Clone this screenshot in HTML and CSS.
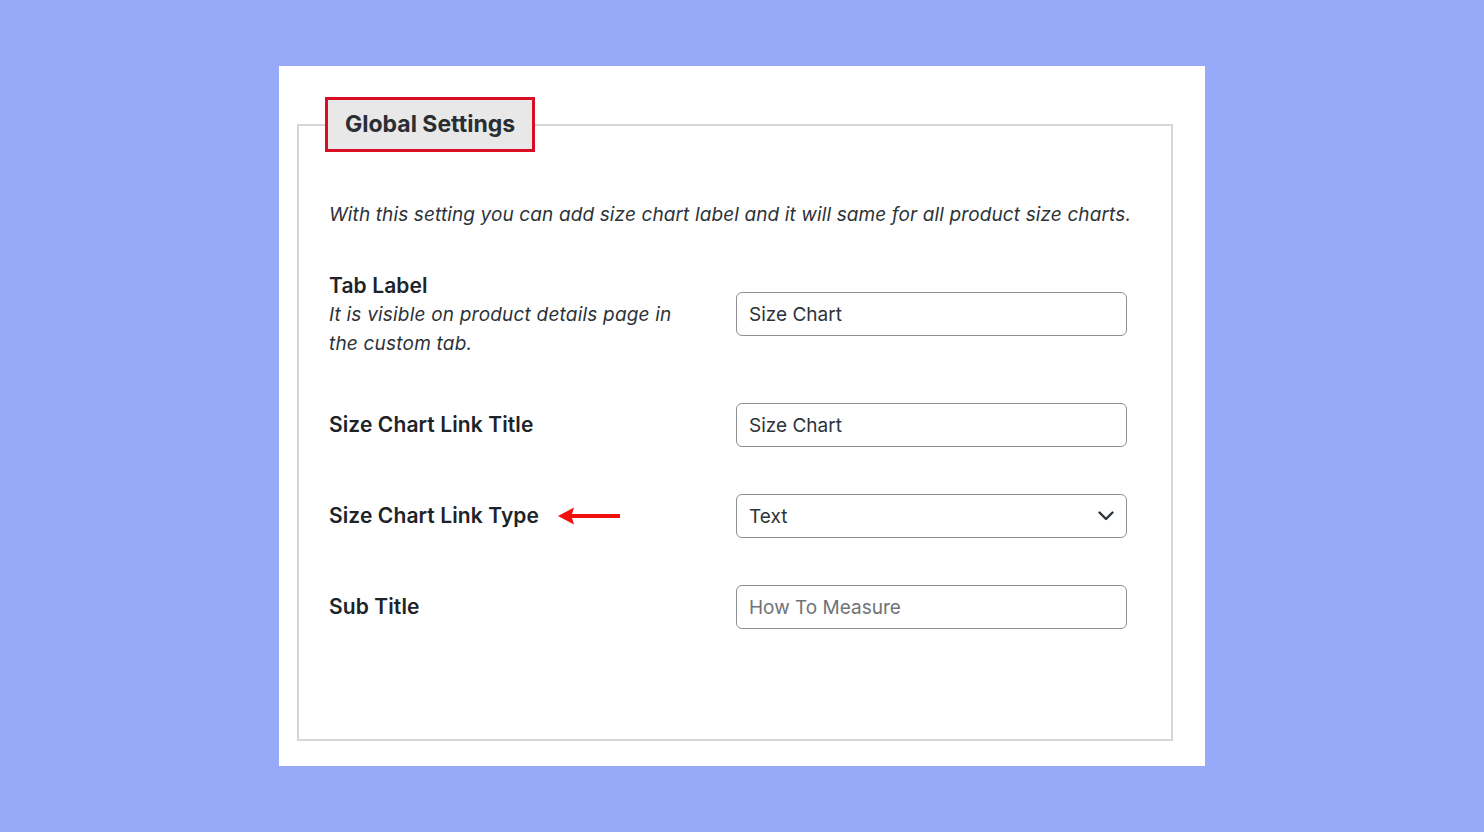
FILE: index.html
```html
<!DOCTYPE html>
<html lang="en">
<head>
<meta charset="utf-8">
<title>Global Settings</title>
<link rel="stylesheet" href="styles.css">
</head>
<body>
<div class="card">
  <fieldset class="settings">
    <legend class="legend">Global Settings</legend>
    <p class="intro">With this setting you can add size chart label and it will same for all product size charts.</p>
    <div class="rows">
      <div class="row row-top">
        <div class="label-col">
          <div class="label">Tab Label</div>
          <div class="hint">It is visible on product details page in the custom tab.</div>
        </div>
        <div class="field field-offset"><input class="input" type="text" value="Size Chart"></div>
      </div>
      <div class="row">
        <div class="label-col"><div class="label">Size Chart Link Title</div></div>
        <div class="field"><input class="input" type="text" value="Size Chart"></div>
      </div>
      <div class="row">
        <div class="label-col label-arrow">
          <div class="label">Size Chart Link Type</div>
          <svg class="arrow" width="62" height="20" viewBox="0 0 62 20"><path d="M0 10 L16 1.5 L14 8 L62 8 L62 12 L14 12 L16 18.5 Z" fill="#f40f0f"/></svg>
        </div>
        <div class="field">
          <div class="select">
            <span>Text</span>
            <svg class="chev" width="16" height="10" viewBox="0 0 16 10"><path d="M1.5 1.5 L8 8 L14.5 1.5" fill="none" stroke="#2c3338" stroke-width="2.4" stroke-linecap="round" stroke-linejoin="round"/></svg>
          </div>
        </div>
      </div>
      <div class="row">
        <div class="label-col"><div class="label">Sub Title</div></div>
        <div class="field"><input class="input" type="text" placeholder="How To Measure"></div>
      </div>
    </div>
  </fieldset>
</div>
</body>
</html>
```
FILE: styles.css
```css
* { box-sizing: border-box; }
html, body { margin: 0; padding: 0; }
body {
  background: #97a9f9;
  font-family: Inter, "Noto Sans", "Liberation Sans", sans-serif;
  color: #1d2327;
  height: 832px;
  overflow: hidden;
}
.card {
  width: 926px;
  height: 700px;
  margin: 66px 0 0 279px;
  background: #ffffff;
  padding: 31px 32px 26px 18px;
}
.settings {
  margin: 0;
  height: 644px;
  border: 2px solid #d6d6d6;
  padding: 0 30px 0 30px;
}
.legend {
  margin-left: -4px;
  padding: 0 17px;
  background: #e8e8e8;
  border: 3px solid #d80f24;
  font-size: 23px;
  font-weight: 700;
  color: #2a2e33;
  line-height: 49px;
}
.intro {
  margin: 51px 0 0 0;
  font-size: 19px;
  font-style: italic;
  line-height: 24px;
  color: #2c3338;
  letter-spacing: 0.12px;
}
.rows {
  margin-top: 46px;
  display: flex;
  flex-direction: column;
  gap: 47px;
}
.row {
  display: flex;
  align-items: center;
}
.row-top { align-items: flex-start; margin-bottom: -2px; }
.label-col {
  width: 407px;
  flex: none;
}
.label-arrow {
  display: flex;
  align-items: center;
  gap: 19px;
}
.label {
  font-size: 21px;
  font-weight: 600;
  line-height: 26px;
  color: #1d2327;
  letter-spacing: 0.1px;
}
.hint {
  margin-top: 1px;
  font-size: 19px;
  font-style: italic;
  line-height: 29px;
  color: #2c3338;
  width: 348px;
  letter-spacing: 0.2px;
}
.field { width: 391px; flex: none; }
.field-offset { margin-top: 19px; }
.input, .select {
  display: block;
  width: 391px;
  height: 44px;
  border: 1.5px solid #8c8f94;
  border-radius: 6px;
  background: #fff;
  font-family: inherit;
  font-size: 19px;
  color: #2c3338;
  padding: 0 12px;
  outline: none;
}
.input::placeholder { color: #6f7378; }
.select {
  display: flex;
  align-items: center;
  justify-content: space-between;
  padding-right: 12px;
}
.chev { display: block; }
.arrow { display: block; }
```
